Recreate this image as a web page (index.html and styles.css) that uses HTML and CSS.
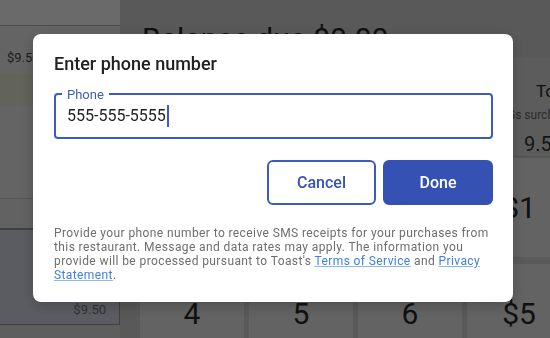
FILE: index.html
```html
<!DOCTYPE html>
<html lang="en">
<head>
<meta charset="utf-8">
<title>Enter phone number</title>
<link rel="stylesheet" href="styles.css">
</head>
<body>
<div class="app">
  <aside class="ticket">
    <div class="ticket-head"></div>
    <div class="ticket-item"><span class="item-price">$9.50</span></div>
    <div class="ticket-sel"></div>
    <div class="ticket-fill"></div>
    <div class="ticket-row"></div>
    <div class="ticket-card"><span class="card-price">$9.50</span></div>
    <div class="ticket-foot"></div>
  </aside>
  <main class="pay">
    <div class="pay-head">Balance due $0.00</div>
    <div class="summary">
      <div class="sum-col">
        <div class="sum-label">Total</div>
        <div class="sum-note">Gs surcharge</div>
        <div class="sum-val">9.50</div>
      </div>
    </div>
    <div class="keypad">
      <div class="key">7</div><div class="key">8</div><div class="key">9</div><div class="key">$1</div>
      <div class="key">4</div><div class="key">5</div><div class="key">6</div><div class="key">$5</div>
    </div>
  </main>
</div>
<div class="scrim">
  <div class="dialog" role="dialog" aria-labelledby="dlg-title">
    <h2 class="dialog-title" id="dlg-title">Enter phone number</h2>
    <div class="field">
      <span class="field-label">Phone</span>
      <div class="field-value"><span>555-555-5555</span><span class="caret"></span></div>
    </div>
    <div class="actions">
      <button class="btn btn-outline">Cancel</button>
      <button class="btn btn-primary">Done</button>
    </div>
    <p class="legal">Provide your phone number to receive SMS receipts for your purchases from this restaurant. Message and data rates may apply. The information you provide will be processed pursuant to Toast's <a href="#">Terms of Service</a> and <a href="#">Privacy Statement</a>.</p>
  </div>
</div>
</body>
</html>
```
FILE: styles.css
```css
html, body {
  margin: 0;
  padding: 0;
}
body {
  width: 550px;
  height: 338px;
  overflow: hidden;
  font-family: Roboto, "Noto Sans", Arial, sans-serif;
}
.app {
  display: flex;
  height: 338px;
}
/* left ticket column */
.ticket {
  width: 120px;
  flex: none;
  display: flex;
  flex-direction: column;
  background: #eeeeee;
}
.ticket-head {
  height: 25px;
  background: #fcfcfc;
  border-bottom: 1px solid #b8b8b8;
}
.ticket-item {
  height: 47px;
  box-sizing: border-box;
  padding: 21px 0 0 7px;
}
.item-price {
  font-size: 13px;
  line-height: 16px;
  color: #484848;
}
.ticket-sel {
  height: 32px;
  background: #e9edd6;
}
.ticket-fill {
  height: 93px;
}
.ticket-row {
  height: 29px;
  border-top: 1px solid #cacaca;
  background: #eaeaea;
}
.ticket-card {
  height: 97px;
  box-sizing: border-box;
  border-top: 2px solid #9a9a9a;
  border-right: 1px solid #9a9a9a;
  border-bottom: 1px solid #9a9a9a;
  background: #dadcea;
  display: flex;
  align-items: flex-end;
  justify-content: flex-end;
  padding: 0 13px 6px 0;
}
.card-price {
  font-size: 13px;
  line-height: 16px;
  color: #7a7a7a;
}
.ticket-foot {
  flex: 1;
  background: #e0e0e0;
}
/* right payment pane */
.pay {
  flex: 1;
  min-width: 0;
  overflow: hidden;
  background: #d4d4d4;
  display: flex;
  flex-direction: column;
}
.pay-head {
  padding: 21px 0 0 22px;
  height: 36px;
  font-size: 30px;
  line-height: 36px;
  color: #262626;
  white-space: nowrap;
}
.summary {
  height: 110px;
  border-bottom: 1px solid #c6c6c6;
  background: #dcdcdc;
  display: flex;
  justify-content: flex-end;
}
.sum-col {
  width: 60px;
  flex: none;
  margin-right: -34px;
  padding-top: 24px;
  white-space: nowrap;
}
.sum-label {
  margin-left: 12px;
  font-size: 17px;
  line-height: 20px;
  color: #262626;
}
.sum-note {
  margin: 7px 0 0 -17px;
  font-size: 12px;
  line-height: 14px;
  color: #6a6a6a;
}
.sum-val {
  margin: 10px 0 0 0;
  font-size: 20px;
  line-height: 24px;
  color: #333333;
}
.keypad {
  display: grid;
  grid-template-columns: repeat(4, 104px);
  grid-auto-rows: 99px;
  gap: 7px 5px;
  padding: 1px 0 0 20px;
}
.key {
  background: #ececec;
  display: flex;
  align-items: center;
  justify-content: center;
  font-size: 30px;
  color: #2a2a2a;
}
/* dialog */
.scrim {
  position: fixed;
  inset: 0;
  background: rgba(0, 0, 0, 0.58);
  display: flex;
  align-items: flex-start;
  padding: 34px 0 0 33px;
  box-sizing: border-box;
}
.dialog {
  width: 480px;
  height: 268px;
  box-sizing: border-box;
  background: #ffffff;
  border-radius: 8px;
  padding: 18px 20px 0 21px;
  display: flex;
  flex-direction: column;
  box-shadow: 0 4px 14px rgba(0, 0, 0, 0.22);
}
.dialog-title {
  margin: 0;
  font-size: 18px;
  line-height: 24px;
  font-weight: 500;
  color: #212121;
}
.field {
  position: relative;
  margin-top: 17px;
  height: 46px;
  box-sizing: border-box;
  border: 2px solid #3d5cc2;
  border-radius: 4px;
  display: flex;
  align-items: center;
  padding-left: 11px;
}
.field-label {
  position: absolute;
  top: -8px;
  left: 6px;
  padding: 0 5px;
  background: #ffffff;
  font-size: 13px;
  line-height: 16px;
  color: #3d5cc2;
}
.field-value {
  display: flex;
  align-items: center;
  font-size: 16px;
  line-height: 22px;
  color: #222222;
}
.caret {
  width: 2px;
  height: 22px;
  margin-left: 1px;
  background: #3d5cc2;
}
.actions {
  margin-top: 21px;
  display: flex;
  justify-content: flex-end;
  gap: 7px;
}
.btn {
  height: 45px;
  box-sizing: border-box;
  border-radius: 6px;
  font-family: inherit;
  font-size: 16px;
  font-weight: 500;
  padding: 0;
  cursor: pointer;
}
.btn-outline {
  width: 109px;
  border: 2px solid #3d5ac0;
  background: #ffffff;
  color: #3552b8;
}
.btn-primary {
  width: 110px;
  border: 2px solid #3451b3;
  background: #3451b3;
  color: #ffffff;
}
.legal {
  margin: 21px 0 0;
  font-size: 12px;
  line-height: 14px;
  letter-spacing: 0.4px;
  color: #6e6e6e;
}
.legal a {
  color: #3f80dd;
  text-decoration: underline;
  text-decoration-color: #8fb6ee;
}
```
